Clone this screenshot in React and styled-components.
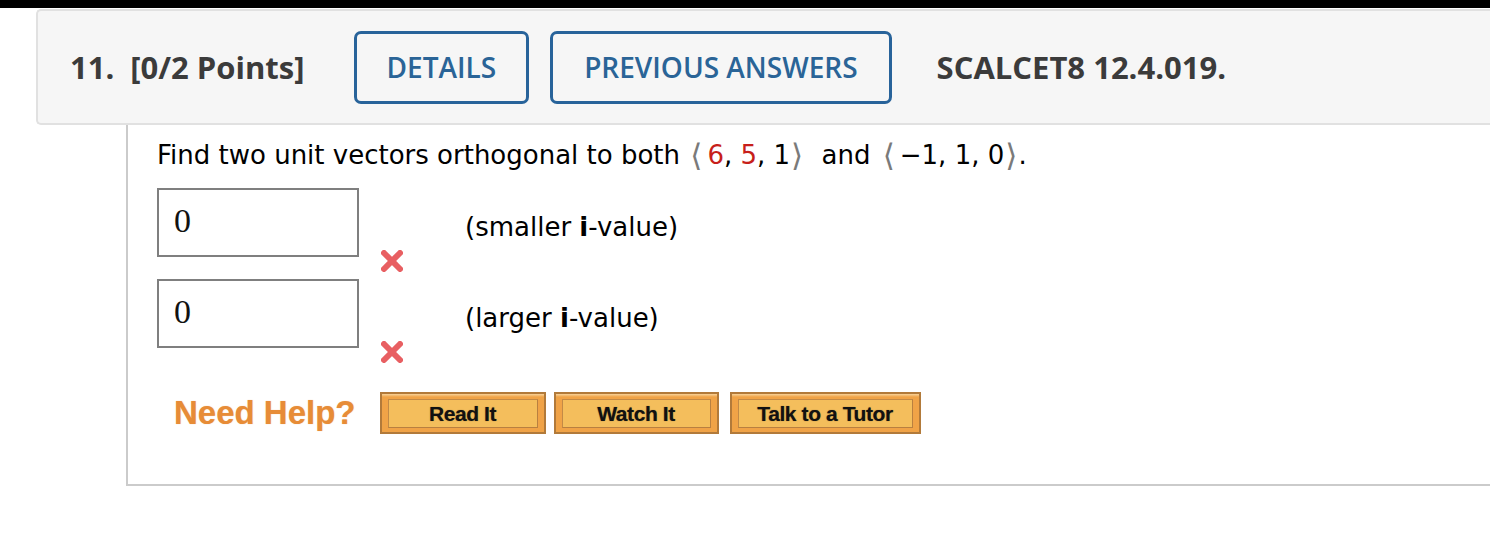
import React from 'react';
import styled, { createGlobalStyle } from 'styled-components';

const Global = createGlobalStyle`
  body {
    margin: 0;
    background: #fff;
    font-family: "DejaVu Sans", Verdana, sans-serif;
  }
`;

const TopBar = styled.div`
  height: 8px;
  background: #000;
`;

const Header = styled.div`
  margin: 1px 0 0 36px;
  height: 112px;
  display: flex;
  align-items: center;
  padding-left: 32px;
  background: #f6f6f6;
  border: 2px solid #e1e1e1;
  border-right: none;
  border-radius: 5px 0 0 5px;
  font-family: "Open Sans", sans-serif;
`;

const Title = styled.span`
  font-size: 31px;
  font-weight: 700;
  color: #3b3b3b;
  margin-right: ${p => p.gap || 0}px;
  white-space: nowrap;
`;

const OutlineButton = styled.button`
  height: 73px;
  padding: 0 ${p => p.pad}px;
  margin-right: ${p => p.gap}px;
  background: transparent;
  border: 3px solid #28639a;
  border-radius: 7px;
  color: #2a6497;
  font-family: "Open Sans", sans-serif;
  font-size: 28px;
  font-weight: 600;
  white-space: nowrap;
`;

const Content = styled.div`
  margin-left: 126px;
  height: 346px;
  border-left: 2px solid #cbcbcb;
  border-bottom: 2px solid #cbcbcb;
  padding: 13px 0 0 29px;
`;

const Question = styled.p`
  margin: 0 0 16px;
  font-size: 26px;
  line-height: 34px;
  color: #000;
  white-space: nowrap;
`;

// tall grey angle brackets around the vectors
const Bracket = styled.span`
  display: inline-block;
  color: #7a7a7a;
  font-size: 31px;
  line-height: 20px;
  vertical-align: -2px;
  margin-left: ${p => p.before || 0}px;
  margin-right: ${p => p.after || 0}px;
`;

const Red = styled.span`
  color: #c71f1b;
`;

const AnswerRow = styled.div`
  display: grid;
  grid-template-columns: 202px 106px auto;
  align-items: start;
  height: ${p => p.h}px;
`;

const AnswerBox = styled.div`
  box-sizing: border-box;
  width: 202px;
  height: 69px;
  border: 2px solid #7f7f7f;
  padding-left: 15px;
  font-family: "Liberation Serif", "Times New Roman", serif;
  font-size: 34px;
  line-height: 62px;
  color: #111;
`;

const Mark = styled.svg`
  margin: 61px 0 0 19px;
  filter: blur(0.4px);
`;

const Label = styled.span`
  font-size: 26px;
  line-height: 32px;
  margin-top: 23px;
  color: #000;
  white-space: nowrap;
`;

const HelpRow = styled.div`
  display: flex;
  align-items: center;
  margin: 1px 0 0 17px;
`;

const NeedHelp = styled.span`
  font-family: "Liberation Sans", Arial, sans-serif;
  font-weight: 700;
  font-size: 33px;
  color: #e78c37;
  margin-right: 24px;
  text-shadow: 0 0 1px rgba(231, 140, 55, 0.6);
`;

const HelpButton = styled.div`
  box-sizing: border-box;
  width: ${p => p.w}px;
  height: 42px;
  margin-right: ${p => p.gap || 0}px;
  padding: 5px 6px 4px 6px;
  background: linear-gradient(#f8d39a 0, #f0a347 3px, #f0a347 100%);
  border: 2px solid #b27a3a;
  display: flex;
`;

const HelpFace = styled.span`
  flex: 1;
  display: flex;
  align-items: center;
  justify-content: center;
  background: #f4be5c;
  border: 1px solid #c38a46;
  border-right-color: #b98040;
  border-bottom-color: #b98040;
  font-family: "Liberation Sans", Arial, sans-serif;
  font-weight: 700;
  font-size: 21px;
  letter-spacing: -0.4px;
  color: #111;
  text-shadow: 0 0 1px rgba(0, 0, 0, 0.5);
  white-space: nowrap;
`;

function WrongMark() {
  return (
    <Mark width="28" height="24" viewBox="0 0 28 24">
      <g stroke="#e85f62" strokeWidth="6" strokeLinecap="round">
        <line x1="6" y1="4" x2="22" y2="20" />
        <line x1="22" y1="4" x2="6" y2="20" />
      </g>
    </Mark>
  );
}

export default function App() {
  return (
    <>
      <Global />
      <TopBar />
      <Header>
        <Title gap={16}>11.</Title>
        <Title gap={49}>[0/2 Points]</Title>
        <OutlineButton pad={30} gap={21}>DETAILS</OutlineButton>
        <OutlineButton pad={31} gap={45}>PREVIOUS ANSWERS</OutlineButton>
        <Title>SCALCET8 12.4.019.</Title>
      </Header>
      <Content>
        <Question>
          Find two unit vectors orthogonal to both{' '}
          <Bracket before={2} after={5}>⟨</Bracket>
          <Red>6</Red>, <Red>5</Red>, 1<Bracket before={1} after={10}>⟩</Bracket>{' '}
          and <Bracket before={4} after={5}>⟨</Bracket>−1, 1, 0<Bracket before={1} after={1}>⟩</Bracket>.
        </Question>
        <AnswerRow h={91}>
          <AnswerBox>0</AnswerBox>
          <WrongMark />
          <Label>(smaller <b>i</b>-value)</Label>
        </AnswerRow>
        <AnswerRow h={112}>
          <AnswerBox>0</AnswerBox>
          <WrongMark />
          <Label>(larger <b>i</b>-value)</Label>
        </AnswerRow>
        <HelpRow>
          <NeedHelp>Need Help?</NeedHelp>
          <HelpButton w={166} gap={8}><HelpFace>Read It</HelpFace></HelpButton>
          <HelpButton w={165} gap={11}><HelpFace>Watch It</HelpFace></HelpButton>
          <HelpButton w={191}><HelpFace>Talk to a Tutor</HelpFace></HelpButton>
        </HelpRow>
      </Content>
    </>
  );
}
